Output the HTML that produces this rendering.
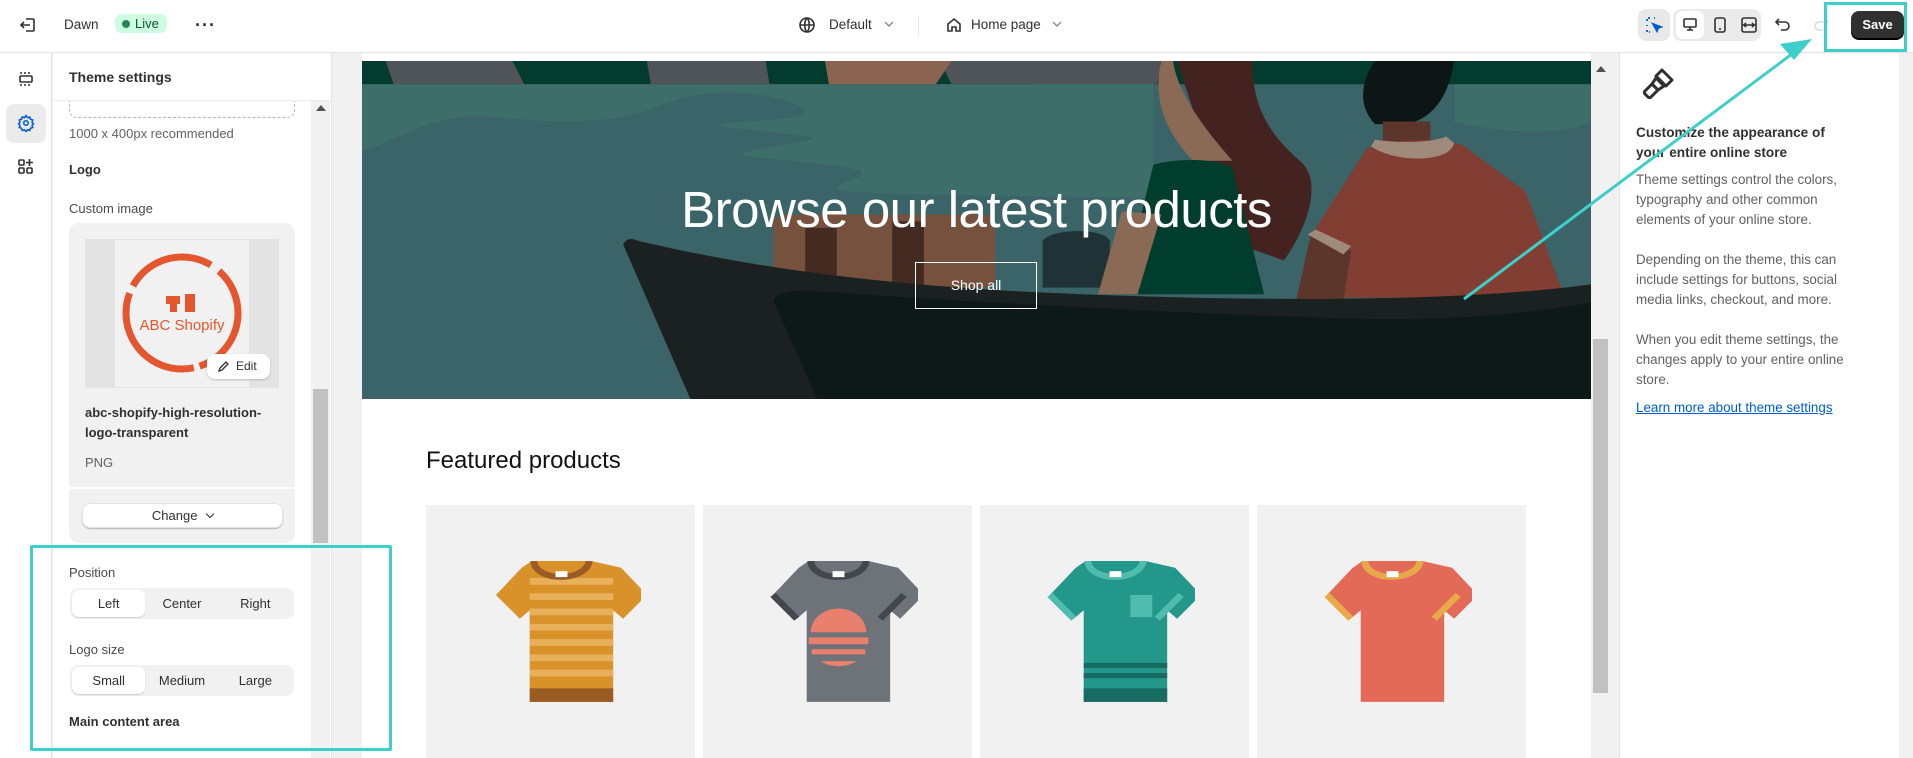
<!DOCTYPE html>
<html><head><meta charset="utf-8"><style>
*{box-sizing:border-box;margin:0;padding:0}
body{width:1913px;height:758px;overflow:hidden;background:#f1f1f1;font-family:"Liberation Sans",Arial,sans-serif;color:#303030;position:relative;font-size:13px}
.abs{position:absolute}
.top{left:0;top:0;width:1913px;height:53px;background:#fff;border-bottom:1px solid #e3e3e3}
.t{position:absolute;white-space:nowrap}
.seg{position:absolute;left:70px;width:224px;height:31px;background:#f1f1f1;border-radius:8px;display:flex;padding:2px}
.seg div{flex:1;text-align:center;line-height:27px;font-size:13px;color:#303030}
.seg div.on{background:#fff;border-radius:7px;box-shadow:0 1px 1px rgba(0,0,0,.15)}
.card{position:absolute;top:505px;width:269px;height:253px;background:#f1f1f1}
.card svg{position:absolute;left:56px;top:56px}
.rp{color:#616161;font-size:13.4px;line-height:20px}
</style></head><body>

<!-- top bar -->
<div class="abs top"></div>
<svg class="abs" style="left:18px;top:15px" width="20" height="20" viewBox="0 0 20 20" fill="none" stroke="#303030" stroke-width="1.6"><path d="M8 4h7a1 1 0 011 1v10a1 1 0 01-1 1H8"/><path d="M12 10H3M6 7l-3 3 3 3"/></svg>
<div class="t" style="left:64px;top:17px;font-size:13.5px">Dawn</div>
<div class="abs" style="left:115px;top:14px;width:52px;height:19px;background:#cdfee1;border-radius:7px"></div>
<div class="abs" style="left:122px;top:20px;width:8px;height:8px;border-radius:50%;background:#29845a"></div>
<div class="t" style="left:135px;top:16px;font-size:13px;color:#0c5132">Live</div>
<div class="t" style="left:195px;top:15px;font-size:18px;letter-spacing:1px;font-weight:bold">···</div>
<svg class="abs" style="left:798px;top:16px" width="18" height="18" viewBox="0 0 18 18" fill="none" stroke="#303030" stroke-width="1.6"><circle cx="9" cy="9" r="7"/><path d="M2 9h14M9 2c-3 3-3 11 0 14M9 2c3 3 3 11 0 14"/></svg>
<div class="t" style="left:829px;top:17px;font-size:13.5px">Default</div>
<svg class="abs" style="left:884px;top:21px" width="10" height="7" viewBox="0 0 10 7" fill="none" stroke="#8a8a8a" stroke-width="1.4"><path d="M1 1l4 4 4-4"/></svg>
<div class="abs" style="left:918px;top:16px;width:1px;height:20px;background:#e3e3e3"></div>
<svg class="abs" style="left:945px;top:16px" width="18" height="18" viewBox="0 0 18 18" fill="none" stroke="#303030" stroke-width="1.6"><path d="M3 8l6-5 6 5v7H11v-4H7v4H3z"/></svg>
<div class="t" style="left:971px;top:17px;font-size:13.5px">Home page</div>
<svg class="abs" style="left:1052px;top:21px" width="10" height="7" viewBox="0 0 10 7" fill="none" stroke="#8a8a8a" stroke-width="1.4"><path d="M1 1l4 4 4-4"/></svg>
<!-- right tools -->
<div class="abs" style="left:1638px;top:9px;width:32px;height:32px;background:#e8e8e8;border-radius:8px"></div>
<svg class="abs" style="left:1645px;top:16px" width="18" height="18" viewBox="0 0 18 18" fill="none" stroke="#005bd3" stroke-width="1.8"><path d="M2 5V2h3M9 2h1M2 9v1M2 14v2h3" stroke-dasharray="2 2"/><path d="M8 8l8 3-3 1-1 3z" fill="#005bd3"/></svg>
<div class="abs" style="left:1673px;top:9px;width:88px;height:32px;background:#ebebeb;border-radius:8px"></div>
<div class="abs" style="left:1676px;top:11px;width:28px;height:28px;background:#fff;border-radius:7px"></div>
<svg class="abs" style="left:1682px;top:17px" width="16" height="16" viewBox="0 0 16 16" fill="none" stroke="#303030" stroke-width="1.6"><rect x="2" y="2" width="12" height="8" rx="1"/><path d="M5 13h6M8 10v3"/></svg>
<svg class="abs" style="left:1712px;top:16px" width="16" height="18" viewBox="0 0 16 18" fill="none" stroke="#303030" stroke-width="1.6"><rect x="3" y="2" width="10" height="14" rx="2"/><path d="M7 13h2"/></svg>
<svg class="abs" style="left:1740px;top:16px" width="18" height="18" viewBox="0 0 18 18" fill="none" stroke="#303030" stroke-width="1.6"><rect x="2" y="2" width="14" height="14" rx="2"/><path d="M2 9h14M6 7l-2 2 2 2M12 7l2 2-2 2"/></svg>
<svg class="abs" style="left:1774px;top:16px" width="18" height="18" viewBox="0 0 18 18" fill="none" stroke="#303030" stroke-width="1.6"><path d="M5 3L2 6l3 3M2 6h9a4 4 0 010 8H7"/></svg>
<svg class="abs" style="left:1812px;top:16px" width="18" height="18" viewBox="0 0 18 18" fill="none" stroke="#dcdcdc" stroke-width="1.6"><path d="M13 3l3 3-3 3M16 6H7a4 4 0 000 8h4"/></svg>
<div class="abs" style="left:1851px;top:11px;width:53px;height:27px;background:#303030;border-radius:8px;box-shadow:0 2px 0 #000;color:#fff;font-weight:bold;font-size:13px;text-align:center;line-height:27px">Save</div>

<!-- left rail -->
<div class="abs" style="left:0;top:53px;width:52px;height:705px;background:#fff;border-right:1px solid #e3e3e3"></div>
<svg class="abs" style="left:17px;top:70px" width="18" height="18" viewBox="0 0 18 18" fill="none" stroke="#303030" stroke-width="1.6"><path d="M3 3h12M3 15h12" stroke-dasharray="2 2"/><rect x="3" y="6" width="12" height="6" rx="1"/></svg>
<div class="abs" style="left:6px;top:104px;width:40px;height:39px;background:#ebebeb;border-radius:8px"></div>
<svg class="abs" style="left:17px;top:114px" width="18" height="18" viewBox="0 0 24 24" fill="none" stroke="#005bd3" stroke-width="2"><circle cx="12" cy="12" r="3"/><path d="M12 2l2 3 3-1 1 3 3 1-1 3 2 2-2 2 1 3-3 1-1 3-3-1-2 3-2-3-3 1-1-3-3-1 1-3-2-2 2-2-1-3 3-1 1-3 3 1z"/></svg>
<svg class="abs" style="left:17px;top:158px" width="18" height="18" viewBox="0 0 18 18" fill="none" stroke="#303030" stroke-width="1.6"><rect x="2" y="2" width="5" height="5" rx="1"/><rect x="2" y="10" width="5" height="5" rx="1"/><rect x="10" y="10" width="5" height="5" rx="1"/><path d="M12.5 1v7M9 4.5h7"/></svg>

<!-- sidebar -->
<div class="abs" style="left:53px;top:53px;width:279px;height:705px;background:#fff"></div>
<div class="abs" style="left:69px;top:96px;width:226px;height:22px;border:1px dashed #b5b5b5;border-top:none;border-radius:0 0 8px 8px"></div>
<div class="abs" style="left:53px;top:53px;width:279px;height:48px;background:#fff;border-bottom:1px solid #ebebeb"></div>
<div class="t" style="left:69px;top:69px;font-size:14px;font-weight:bold">Theme settings</div>
<div class="abs" style="left:311px;top:101px;width:19px;height:657px;background:#f1f1f1"></div>
<div class="abs" style="left:313px;top:389px;width:15px;height:154px;background:#c1c1c1"></div>
<div class="abs" style="left:316px;top:105px;width:0;height:0;border-left:5px solid transparent;border-right:5px solid transparent;border-bottom:6px solid #505050"></div>
<div class="abs" style="left:331px;top:53px;width:1px;height:705px;background:#e3e3e3"></div>
<div class="t" style="left:69px;top:126px;color:#616161">1000 x 400px recommended</div>
<div class="t" style="left:69px;top:162px;font-weight:bold">Logo</div>
<div class="t" style="left:69px;top:201px;color:#4a4a4a">Custom image</div>
<div class="abs" style="left:69px;top:223px;width:226px;height:264px;background:#f1f1f1;border-radius:10px 10px 0 0"></div>
<div class="abs" style="left:69px;top:489px;width:226px;height:54px;background:#f1f1f1;border-radius:0 0 10px 10px"></div>
<div class="abs" style="left:85px;top:239px;width:194px;height:149px;background:#e3e3e3"></div>
<div class="abs" style="left:115px;top:240px;width:134px;height:147px;background:#f1f1f1"></div>
<svg class="abs" style="left:115px;top:244px" width="134" height="138" viewBox="0 0 134 138"><circle cx="67" cy="69" r="56" fill="none" stroke="#e4572e" stroke-width="7" stroke-dasharray="70 6 120 8 90 10"/><rect x="51" y="52" width="14" height="8" fill="#e4572e"/><rect x="55" y="52" width="7" height="16" fill="#e4572e"/><rect x="70" y="50" width="10" height="18" fill="#e4572e"/><text x="67" y="86" font-family="Liberation Sans" font-size="15" fill="#e4572e" text-anchor="middle">ABC Shopify</text></svg>
<div class="abs" style="left:207px;top:354px;width:63px;height:25px;background:#fff;border-radius:8px;box-shadow:0 1px 2px rgba(0,0,0,.2)"></div>
<svg class="abs" style="left:217px;top:360px" width="13" height="13" viewBox="0 0 13 13" fill="none" stroke="#303030" stroke-width="1.3"><path d="M2 11l1-3 6-6 2 2-6 6z"/></svg>
<div class="t" style="left:236px;top:359px;font-size:12px">Edit</div>
<div class="t" style="left:85px;top:403px;font-weight:bold;line-height:20px;color:#303030">abc-shopify-high-resolution-<br>logo-transparent</div>
<div class="t" style="left:85px;top:455px;color:#616161">PNG</div>
<div class="abs" style="left:82px;top:503px;width:201px;height:25px;background:#fff;border-radius:8px;box-shadow:0 1px 1px rgba(0,0,0,.25),inset 0 0 0 1px #e3e3e3;text-align:center;line-height:25px;font-size:13px">Change <span style="display:inline-block;width:6px;height:6px;border-right:1.5px solid #303030;border-bottom:1.5px solid #303030;transform:rotate(45deg);margin:0 0 3px 6px"></span></div>
<div class="t" style="left:69px;top:565px;color:#4a4a4a">Position</div>
<div class="seg" style="top:588px"><div class="on">Left</div><div>Center</div><div>Right</div></div>
<div class="t" style="left:69px;top:642px;color:#4a4a4a">Logo size</div>
<div class="seg" style="top:665px"><div class="on">Small</div><div>Medium</div><div>Large</div></div>
<div class="t" style="left:69px;top:714px;font-weight:bold">Main content area</div>

<!-- preview -->
<div class="abs" style="left:362px;top:53px;width:1229px;height:705px;background:#fff"></div>
<svg class="abs" style="left:362px;top:61px" width="1229" height="338" viewBox="0 18 1553 1017" preserveAspectRatio="none">
<rect x="0" y="18" width="1553" height="1017" fill="#3a6468"/>
<rect x="0" y="18" width="1553" height="70" fill="#033c2f"/>
<path d="M30 18h80l5 70H40zM110 18h80l15 70H115zM360 18h150l5 70H365zM730 18h280l-5 70H745z" fill="#4f5458"/>
<path d="M585 18h160l-20 70H590z" fill="#8a6450"/>
<path d="M0 290C60 240 90 180 150 185S300 230 380 150 560 140 560 170 450 200 450 210 570 240 570 250 470 290 480 300 620 330 630 350 600 380 600 400 720 420 1000 430V88H0z" fill="#3e6e6a"/>
<path d="M840 130L920 140 880 200 1000 230 850 300 930 340 840 380 1000 400V88H850z" fill="#3e6e6a"/>
<path d="M1380 200C1450 240 1520 240 1553 200V88H1380z" fill="#3e6e6a"/>
<rect x="520" y="480" width="280" height="220" rx="20" fill="#76523e"/>
<path d="M560 520h40v180h-40zM670 500h40v200h-40z" fill="#432b22"/>
<path d="M860 560c10-40 80-40 85 0v140h-85z" fill="#1f3337"/>
<path d="M1030 18h95c0 100 10 200 60 300 30 60 10 200-20 300l-60-50z" fill="#43221f"/>
<path d="M1010 18c-10 100 0 200 40 300h50c-30-80-70-200-75-300z" fill="#8a6a55"/>
<path d="M1000 330c30-20 80-20 100 10l40 380H960z" fill="#013d2c"/>
<path d="M960 470l-30 250h50l30-240z" fill="#8a6a55"/>
<path d="M1280 18h100c-5 80-20 170-60 190h-40c-20-50-20-120 0-190z" fill="#0d1614"/>
<path d="M1290 200h60v70h-60z" fill="#5c362b"/>
<path d="M1270 280c40-30 90-30 120-10l80 140 50 320H1190l10-190z" fill="#823e33"/>
<path d="M1275 275c30 50 100 50 105-10l-10-20c-20 20-60 20-90 10z" fill="#a08a7c"/>
<path d="M1200 530l50 60-10 150h-60z" fill="#5c362b"/>
<path d="M1195 540l45 60 10-25-45-50z" fill="#a08a7c"/>
<path d="M330 570c5-20 10-20 20-10 110 60 250 120 470 150 250 30 550 40 733-20V1035H415z" fill="#1a2120"/>
<path d="M520 740c5-30 20-35 80-25 240 40 600 80 700 80 120 0 200-30 253-50V1035H575z" fill="#0d1917"/>
</svg>
<div class="t" style="left:362px;width:1229px;text-align:center;top:180px;font-size:51px;color:#fff;letter-spacing:-0.5px">Browse our latest products</div>
<div class="abs" style="left:915px;top:262px;width:122px;height:47px;border:1px solid #fff;color:#fff;text-align:center;line-height:45px;font-size:14px">Shop all</div>
<div class="t" style="left:426px;top:447px;font-size:24px;color:#121212">Featured products</div>

<div class="card" style="left:426px"><svg width="159" height="146" viewBox="0 0 160 172" preserveAspectRatio="none"><path d="M40 8L14 40l24 28 10-10v108h84V58l10 10 24-28L140 8 110 0H50z" fill="#d9912a"/><g fill="#e8b05a"><rect x="48" y="20" width="84" height="8"/><rect x="48" y="38" width="84" height="8"/><rect x="48" y="56" width="84" height="8"/><rect x="48" y="74" width="84" height="8"/><rect x="48" y="92" width="84" height="8"/><rect x="48" y="110" width="84" height="8"/><rect x="48" y="128" width="84" height="8"/></g><rect x="48" y="150" width="84" height="16" fill="#9b5c24"/><path d="M52 0c2 25 52 25 56 0" fill="none" stroke="#9b5c24" stroke-width="7"/><rect x="74" y="12" width="12" height="7" fill="#fff"/></svg></div>
<div class="card" style="left:703px"><svg width="159" height="146" viewBox="0 0 160 172" preserveAspectRatio="none"><path d="M40 8L14 40l24 28 10-10v108h84V58l10 10 24-28L140 8 110 0H50z" fill="#6e737a"/><path d="M14 40l24 28M146 40l-24 28" stroke="#42474c" stroke-width="7"/><path d="M52 0c2 25 52 25 56 0" fill="none" stroke="#42474c" stroke-width="7"/><rect x="74" y="12" width="12" height="7" fill="#fff"/><path d="M52 84a28 28 0 0156 0z" fill="#e9806e"/><rect x="50" y="90" width="60" height="8" fill="#e9806e"/><rect x="53" y="104" width="54" height="6" fill="#e9806e"/><path d="M62 118h36c-10 8-26 8-36 0z" fill="#e9806e"/></svg></div>
<div class="card" style="left:980px"><svg width="159" height="146" viewBox="0 0 160 172" preserveAspectRatio="none"><path d="M40 8L14 40l24 28 10-10v108h84V58l10 10 24-28L140 8 110 0H50z" fill="#23978a"/><path d="M14 40l24 28M146 40l-24 28" stroke="#4fbcae" stroke-width="7"/><path d="M52 0c2 25 52 25 56 0" fill="none" stroke="#4fbcae" stroke-width="7"/><rect x="74" y="12" width="12" height="7" fill="#fff"/><rect x="95" y="40" width="22" height="26" fill="#4fbcae"/><rect x="48" y="120" width="84" height="6" fill="#176b63"/><rect x="48" y="132" width="84" height="6" fill="#176b63"/><rect x="48" y="150" width="84" height="16" fill="#176b63"/></svg></div>
<div class="card" style="left:1257px"><svg width="159" height="146" viewBox="0 0 160 172" preserveAspectRatio="none"><path d="M40 8L14 40l24 28 10-10v108h84V58l10 10 24-28L140 8 110 0H50z" fill="#e36a57"/><path d="M14 40l24 28M146 40l-24 28" stroke="#e8a94a" stroke-width="7"/><path d="M52 0c2 25 52 25 56 0" fill="none" stroke="#e8a94a" stroke-width="7"/><rect x="74" y="12" width="12" height="7" fill="#fff"/></svg></div>

<div class="abs" style="left:1591px;top:53px;width:19px;height:705px;background:#f1f1f1"></div>
<div class="abs" style="left:1593px;top:339px;width:15px;height:354px;background:#c1c1c1"></div>
<div class="abs" style="left:1596px;top:66px;width:0;height:0;border-left:5px solid transparent;border-right:5px solid transparent;border-bottom:6px solid #505050"></div>

<!-- right panel -->
<div class="abs" style="left:1619px;top:53px;width:294px;height:705px;background:#fff;border-left:1px solid #e3e3e3"></div>
<div class="abs" style="left:1899px;top:53px;width:14px;height:705px;background:#f1f1f1"></div>
<svg class="abs" style="left:1642px;top:66px" width="34" height="34" viewBox="0 0 34 34" fill="none" stroke="#303030" stroke-width="3" stroke-linejoin="round"><path d="M20 4l10 10-6 6-10-10z"/><path d="M14 12l8 8-6 4-6-6z"/><path d="M10 18l6 6-7 7a2 2 0 01-3 0l-3-3a2 2 0 010-3z"/></svg>
<div class="t" style="left:1636px;top:123px;font-weight:bold;font-size:13.6px;line-height:20px;color:#303030">Customize the appearance of<br>your entire online store</div>
<div class="t rp" style="left:1636px;top:170px">Theme settings control the colors,<br>typography and other common<br>elements of your online store.<br><br>Depending on the theme, this can<br>include settings for buttons, social<br>media links, checkout, and more.<br><br>When you edit theme settings, the<br>changes apply to your entire online<br>store.</div>
<div class="t" style="left:1636px;top:400px;font-size:13.4px;color:#005bd3;text-decoration:underline">Learn more about theme settings</div>

<!-- annotations -->
<div class="abs" style="left:30px;top:545px;width:362px;height:206px;border:3px solid #3ecfca;border-radius:2px"></div>
<div class="abs" style="left:1824px;top:2px;width:83px;height:50px;border:3px solid #3ecfca"></div>
<svg class="abs" style="left:0;top:0" width="1913" height="758"><line x1="1464" y1="299" x2="1800" y2="48" stroke="#3ecfca" stroke-width="3"/><path d="M1812 39l-32 5 14 16z" fill="#3ecfca"/></svg>
</body></html>
